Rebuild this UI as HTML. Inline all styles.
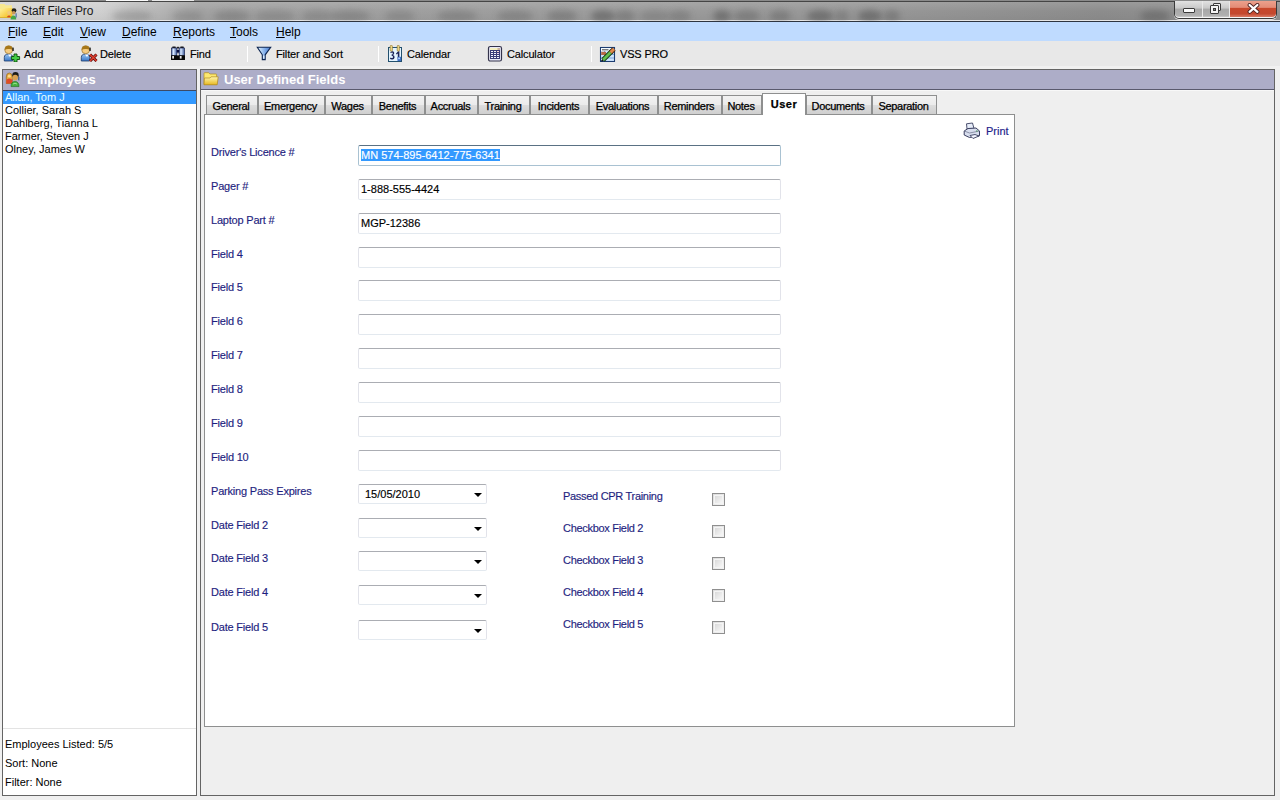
<!DOCTYPE html>
<html><head><meta charset="utf-8">
<style>
*{margin:0;padding:0;box-sizing:border-box}
html,body{width:1280px;height:800px;overflow:hidden;background:#f0f0f0;font-family:"Liberation Sans",sans-serif;font-size:11px;color:#000;-webkit-text-stroke-width:0.15px}
.a{position:absolute}
#title{left:0;top:1px;width:1280px;height:21px;overflow:hidden;background:linear-gradient(rgba(255,255,255,.12),rgba(255,255,255,0) 50%,rgba(0,0,0,.04)),linear-gradient(90deg,#d6d6d6 0,#d0d0d0 100px,#a2a2a2 200px,#9c9c9c 600px,#969696 900px,#8c8c8c 1100px,#929292 1280px);border-top:1px solid #454545;border-bottom:1px solid #2e3540;box-shadow:inset 0 -1px 0 #e6e6e6}
#menu{left:0;top:22px;width:1280px;height:19px;background:#bfdbff}
#tool{left:0;top:41px;width:1280px;height:25px;background:#e8e8e8}
.mi{top:25px;font-size:12px;color:#000;-webkit-text-stroke-width:0}
.mi u{text-decoration:underline}
.tb{top:48px;font-size:11px;letter-spacing:-0.15px}
.sep{top:46px;width:1px;height:16px;background:#a8a8a8;border-right:1px solid #fff}
.panel{border:1px solid #646464;background:#fff}
.hdr{background:#adadc8;border-bottom:1px solid #5a5a6e;height:20px}
.hdrt{color:#fff;font-weight:bold;font-size:13px;-webkit-text-stroke-width:0}
.li{-webkit-text-stroke-width:0;left:3px;width:193px;height:13px;font-size:11px;padding-left:2px;line-height:13px}
.tab{top:95px;height:19px;border:1px solid #8e8f8f;border-bottom:none;background:linear-gradient(#f2f2f2,#ebebeb 50%,#dddddd 51%,#cfcfcf);font-size:11px;text-align:center;line-height:20px;letter-spacing:-0.3px;padding-right:2px;-webkit-text-stroke:0.25px #000}
.lbl{margin-top:1px;letter-spacing:-0.2px;left:211px;color:#1e1e80;font-size:11px}
.tx{left:358px;width:423px;height:21px;border:1px solid #e2e3ea;border-top-color:#abadb3;border-bottom-color:#e3e9ef;background:#fff;font-size:11px;line-height:19px;padding-left:2px;border-radius:2px}
.cb{left:358px;width:129px;height:20px;border:1px solid #e2e3ea;border-top-color:#abadb3;border-bottom-color:#e3e9ef;background:#fff;font-size:11px;line-height:18px;padding-left:6px;border-radius:2px}
.arr{position:absolute;right:4px;top:8px;width:0;height:0;border-left:4px solid transparent;border-right:4px solid transparent;border-top:4px solid #000}
.chk{left:712px;width:13px;height:13px;border:1px solid #8f8f8f;background:linear-gradient(135deg,#dcdcdc,#f4f4f4)}
.chk::after{content:"";position:absolute;left:1px;top:1px;right:1px;bottom:1px;border:1px solid #f4f4f4;background:linear-gradient(135deg,#dadada,#f6f6f6)}
.cl{margin-top:1px;letter-spacing:-0.3px;left:563px;color:#1e1e80;font-size:11px}
</style></head><body>

<!-- title bar -->
<div class="a" style="left:0;top:0;width:1280px;height:1px;background:#8a8a8a"></div><div class="a" style="left:106px;top:0;width:42px;height:1px;background:#fafafa"></div><div class="a" style="left:152px;top:0;width:42px;height:1px;background:#e8e8e8"></div>
<div id="title" class="a"><i style="position:absolute;left:112px;top:8px;width:40px;height:12px;border-radius:50%;background:rgba(50,50,50,0.20);filter:blur(3px)"></i><i style="position:absolute;left:172px;top:8px;width:30px;height:12px;border-radius:50%;background:rgba(50,50,50,0.16);filter:blur(3px)"></i><i style="position:absolute;left:214px;top:8px;width:36px;height:12px;border-radius:50%;background:rgba(50,50,50,0.20);filter:blur(3px)"></i><i style="position:absolute;left:255px;top:8px;width:40px;height:12px;border-radius:50%;background:rgba(50,50,50,0.16);filter:blur(3px)"></i><i style="position:absolute;left:302px;top:8px;width:30px;height:12px;border-radius:50%;background:rgba(50,50,50,0.16);filter:blur(3px)"></i><i style="position:absolute;left:330px;top:8px;width:40px;height:12px;border-radius:50%;background:rgba(50,50,50,0.20);filter:blur(3px)"></i><i style="position:absolute;left:385px;top:8px;width:30px;height:12px;border-radius:50%;background:rgba(50,50,50,0.16);filter:blur(3px)"></i><i style="position:absolute;left:437px;top:8px;width:40px;height:12px;border-radius:50%;background:rgba(50,50,50,0.20);filter:blur(3px)"></i><i style="position:absolute;left:497px;top:8px;width:36px;height:12px;border-radius:50%;background:rgba(50,50,50,0.20);filter:blur(3px)"></i><i style="position:absolute;left:547px;top:8px;width:30px;height:12px;border-radius:50%;background:rgba(50,50,50,0.24);filter:blur(3px)"></i><i style="position:absolute;left:591px;top:8px;width:24px;height:12px;border-radius:50%;background:rgba(50,50,50,0.36);filter:blur(3px)"></i><i style="position:absolute;left:615px;top:8px;width:20px;height:12px;border-radius:50%;background:rgba(50,50,50,0.24);filter:blur(3px)"></i><i style="position:absolute;left:640px;top:8px;width:30px;height:12px;border-radius:50%;background:rgba(50,50,50,0.16);filter:blur(3px)"></i><i style="position:absolute;left:669px;top:8px;width:22px;height:12px;border-radius:50%;background:rgba(50,50,50,0.20);filter:blur(3px)"></i><i style="position:absolute;left:713px;top:8px;width:18px;height:12px;border-radius:50%;background:rgba(50,50,50,0.36);filter:blur(3px)"></i><i style="position:absolute;left:734px;top:8px;width:26px;height:12px;border-radius:50%;background:rgba(50,50,50,0.24);filter:blur(3px)"></i><i style="position:absolute;left:769px;top:8px;width:22px;height:12px;border-radius:50%;background:rgba(50,50,50,0.24);filter:blur(3px)"></i><i style="position:absolute;left:807px;top:8px;width:26px;height:12px;border-radius:50%;background:rgba(50,50,50,0.36);filter:blur(3px)"></i><i style="position:absolute;left:835px;top:8px;width:14px;height:12px;border-radius:50%;background:rgba(50,50,50,0.20);filter:blur(3px)"></i><i style="position:absolute;left:858px;top:8px;width:24px;height:12px;border-radius:50%;background:rgba(50,50,50,0.36);filter:blur(3px)"></i><i style="position:absolute;left:884px;top:8px;width:16px;height:12px;border-radius:50%;background:rgba(50,50,50,0.24);filter:blur(3px)"></i><i style="position:absolute;left:1140px;top:8px;width:30px;height:12px;border-radius:50%;background:rgba(50,50,50,0.28);filter:blur(3px)"></i></div>
<div class="a" style="left:21px;top:4px;font-size:12px;color:#1a1a1a;letter-spacing:-0.2px;-webkit-text-stroke-width:0">Staff Files Pro</div>

<!-- menu -->
<div id="menu" class="a"></div>
<div class="a mi" style="left:8px"><u>F</u>ile</div>
<div class="a mi" style="left:43px"><u>E</u>dit</div>
<div class="a mi" style="left:80px"><u>V</u>iew</div>
<div class="a mi" style="left:122px"><u>D</u>efine</div>
<div class="a mi" style="left:173px"><u>R</u>eports</div>
<div class="a mi" style="left:230px"><u>T</u>ools</div>
<div class="a mi" style="left:276px"><u>H</u>elp</div>

<!-- toolbar -->
<div id="tool" class="a"></div>
<div class="a tb" style="left:24px">Add</div>
<div class="a tb" style="left:100px">Delete</div>
<div class="a tb" style="left:190px">Find</div>
<div class="a sep" style="left:247px"></div>
<div class="a tb" style="left:276px">Filter and Sort</div>
<div class="a sep" style="left:378px"></div>
<div class="a tb" style="left:407px">Calendar</div>
<div class="a tb" style="left:507px">Calculator</div>
<div class="a sep" style="left:591px"></div>
<div class="a tb" style="left:620px">VSS PRO</div>

<!-- left panel -->
<div class="a panel" style="left:2px;top:69px;width:195px;height:727px"></div>
<div class="a hdr" style="left:3px;top:70px;width:193px;height:21px;border-bottom-color:#3c4a66"></div>
<div class="a hdrt" style="left:27px;top:72px">Employees</div>
<div class="a li" style="top:91px;background:#3399ff;color:#e8ffff">Allan, Tom J</div>
<div class="a li" style="top:104px">Collier, Sarah S</div>
<div class="a li" style="top:117px">Dahlberg, Tianna L</div>
<div class="a li" style="top:130px">Farmer, Steven J</div>
<div class="a li" style="top:143px">Olney, James W</div>
<div class="a" style="left:3px;top:728px;width:193px;height:1px;background:#e3e3e3"></div>
<div class="a" style="left:5px;top:738px;-webkit-text-stroke-width:0">Employees Listed: 5/5</div>
<div class="a" style="left:5px;top:757px;-webkit-text-stroke-width:0">Sort: None</div>
<div class="a" style="left:5px;top:776px;-webkit-text-stroke-width:0">Filter: None</div>

<!-- right panel -->
<div class="a panel" style="left:200px;top:69px;width:1075px;height:727px;background:#efefef"></div>
<div class="a hdr" style="left:201px;top:70px;width:1073px"></div>
<div class="a hdrt" style="left:224px;top:72px">User Defined Fields</div>
<div class="a" style="left:201px;top:90px;width:1073px;height:1px;background:#f8f8f8"></div>

<!-- tab content panel -->
<div class="a" style="left:204px;top:114px;width:811px;height:613px;background:#fff;border:1px solid #8e8f8f;border-top-color:#8e8f8f"></div>

<!-- tabs -->
<div class="a tab" style="left:206px;width:52px">General</div>
<div class="a tab" style="left:258px;width:67px">Emergency</div>
<div class="a tab" style="left:325px;width:47px">Wages</div>
<div class="a tab" style="left:372px;width:53px">Benefits</div>
<div class="a tab" style="left:425px;width:53px">Accruals</div>
<div class="a tab" style="left:478px;width:52px">Training</div>
<div class="a tab" style="left:530px;width:59px">Incidents</div>
<div class="a tab" style="left:589px;width:69px">Evaluations</div>
<div class="a tab" style="left:658px;width:64px">Reminders</div>
<div class="a tab" style="left:722px;width:40px">Notes</div>
<div class="a tab" style="left:762px;top:93px;width:44px;height:22px;background:#fff;font-weight:bold;line-height:21px;font-size:11px;letter-spacing:0.5px;padding-left:2px">User</div>
<div class="a tab" style="left:806px;width:66px">Documents</div>
<div class="a tab" style="left:872px;width:65px">Separation</div>

<!-- print -->
<div class="a" style="left:986px;top:125px;color:#21218a;font-size:11px">Print</div>

<!-- fields -->
<div class="a lbl" style="top:145px">Driver's Licence #</div>
<div class="a tx" style="top:145px;border-color:#a9c2d2;border-top-color:#5a7184"><span style="background:#3399ff;color:#fff">MN 574-895-6412-775-6341</span></div>
<div class="a lbl" style="top:179px">Pager #</div>
<div class="a tx" style="top:179px">1-888-555-4424</div>
<div class="a lbl" style="top:213px">Laptop Part #</div>
<div class="a tx" style="top:213px">MGP-12386</div>
<div class="a lbl" style="top:247px">Field 4</div>
<div class="a tx" style="top:247px"></div>
<div class="a lbl" style="top:280px">Field 5</div>
<div class="a tx" style="top:280px"></div>
<div class="a lbl" style="top:314px">Field 6</div>
<div class="a tx" style="top:314px"></div>
<div class="a lbl" style="top:348px">Field 7</div>
<div class="a tx" style="top:348px"></div>
<div class="a lbl" style="top:382px">Field 8</div>
<div class="a tx" style="top:382px"></div>
<div class="a lbl" style="top:416px">Field 9</div>
<div class="a tx" style="top:416px"></div>
<div class="a lbl" style="top:450px">Field 10</div>
<div class="a tx" style="top:450px"></div>

<div class="a lbl" style="top:484px">Parking Pass Expires</div>
<div class="a cb" style="top:484px">15/05/2010<i class="arr"></i></div>
<div class="a lbl" style="top:518px">Date Field 2</div>
<div class="a cb" style="top:518px"><i class="arr"></i></div>
<div class="a lbl" style="top:551px">Date Field 3</div>
<div class="a cb" style="top:551px"><i class="arr"></i></div>
<div class="a lbl" style="top:585px">Date Field 4</div>
<div class="a cb" style="top:585px"><i class="arr"></i></div>
<div class="a lbl" style="top:620px">Date Field 5</div>
<div class="a cb" style="top:620px"><i class="arr"></i></div>

<div class="a cl" style="top:489px">Passed CPR Training</div>
<div class="a chk" style="top:493px"></div>
<div class="a cl" style="top:521px">Checkbox Field 2</div>
<div class="a chk" style="top:525px"></div>
<div class="a cl" style="top:553px">Checkbox Field 3</div>
<div class="a chk" style="top:557px"></div>
<div class="a cl" style="top:585px">Checkbox Field 4</div>
<div class="a chk" style="top:589px"></div>
<div class="a cl" style="top:617px">Checkbox Field 5</div>
<div class="a chk" style="top:621px"></div>


<!-- ICONS -->
<svg class="a" style="left:0;top:3px" width="18" height="17" viewBox="0 0 18 17">
 <defs><linearGradient id="fy" x1="0" y1="0" x2="1" y2="1"><stop offset="0" stop-color="#fff2a0"/><stop offset="1" stop-color="#f2b810"/></linearGradient></defs>
 <path d="M0,1 H4.5 L5.5,2.2 H12 V6 H0Z" fill="#f8e890"/>
 <path d="M0,6 H4 L5,5 H12.5 V14.5 H0Z" fill="url(#fy)"/>
 <path d="M0,14.5 H12.5" stroke="#d8a818" stroke-width=".8"/>
 <ellipse cx="9" cy="10" rx="1.8" ry="2" fill="#f0c880" opacity=".9"/>
 <path d="M7.2,13.5 Q9,11.6 10.8,13.5 V14.3 H7.2Z" fill="#d84a1c"/>
 <circle cx="14" cy="7.6" r="2.4" fill="#24241c"/>
 <ellipse cx="13.7" cy="9.8" rx="1.9" ry="1.8" fill="#c89858"/>
 <path d="M10.6,16.6 Q10.6,12.6 13.5,12.6 Q16.2,12.6 16.2,16.6Z" fill="#46a846"/>
 <path d="M15.6,10.2 h1 v4.2 h-1z" fill="#34609a"/>
</svg>

<svg class="a" style="left:3px;top:44px" width="18" height="18" viewBox="0 0 18 18">
 <defs><linearGradient id="bb" x1="0" y1="0" x2="0" y2="1"><stop offset="0" stop-color="#9cc8f4"/><stop offset="1" stop-color="#3a78c8"/></linearGradient></defs>
 <path d="M1.3,17 V13.5 Q1.3,10 5.5,10 Q9.7,10 9.7,13.5 V17Z" fill="url(#bb)" stroke="#1c3a68" stroke-width=".8"/>
 <path d="M5,10.5 L7,13 L8.5,10.5Z" fill="#fff"/>
 <circle cx="5.7" cy="5.7" r="4" fill="#f6cc80" stroke="#8a6420" stroke-width=".6"/>
 <path d="M1.8,6 Q1.8,1.7 5.7,1.7 Q9.6,1.7 9.6,6 Q8,4.8 5.7,5 Q3.4,4.8 1.8,6Z" fill="#a87818"/>
 <rect x="9.4" y="3.6" width="1.3" height="3.4" fill="#111"/>
 <path d="M11,10 h3 v2.5 h2.6 v3 h-2.6 v2.5 h-3 v-2.5 h-2.6 v-3 h2.6z" fill="#44cc44" stroke="#0a4a0a" stroke-width=".9"/>
</svg>

<svg class="a" style="left:80px;top:44px" width="18" height="18" viewBox="0 0 18 18">
 <path d="M1.3,17 V13.5 Q1.3,10 5.5,10 Q9.7,10 9.7,13.5 V17Z" fill="url(#bb)" stroke="#1c3a68" stroke-width=".8"/>
 <path d="M5,10.5 L7,13 L8.5,10.5Z" fill="#fff"/>
 <circle cx="5.7" cy="5.7" r="4" fill="#f6cc80" stroke="#8a6420" stroke-width=".6"/>
 <path d="M1.8,6 Q1.8,1.7 5.7,1.7 Q9.6,1.7 9.6,6 Q8,4.8 5.7,5 Q3.4,4.8 1.8,6Z" fill="#a87818"/>
 <rect x="9.4" y="3.6" width="1.3" height="3.4" fill="#111"/>
 <path d="M10,10.5 L16.5,17 M16.5,10.5 L10,17" stroke="#5a0a0a" stroke-width="3"/>
 <path d="M10,10.5 L16.5,17 M16.5,10.5 L10,17" stroke="#e04030" stroke-width="1.6"/>
</svg>

<svg class="a" style="left:170px;top:45px" width="16" height="16" viewBox="0 0 16 16">
 <defs><linearGradient id="bn" x1="0" y1="0" x2="1" y2="0"><stop offset="0" stop-color="#4a68a8"/><stop offset=".35" stop-color="#d8e8ff"/><stop offset="1" stop-color="#3a5898"/></linearGradient></defs>
 <path d="M2,3.5 L2.5,1.5 H5.5 L6,3.5Z M10,3.5 L10.5,1.5 H13.5 L14,3.5Z" fill="#111"/>
 <rect x="6.8" y="1.8" width="2.4" height="1.6" fill="#222"/>
 <rect x="1.5" y="3" width="5.5" height="8" fill="url(#bn)" stroke="#1a2450" stroke-width=".7"/>
 <rect x="9" y="3" width="5.5" height="8" fill="url(#bn)" stroke="#1a2450" stroke-width=".7"/>
 <rect x="6.8" y="5" width="2.4" height="2.6" fill="#0a1040"/>
 <rect x="1" y="10.3" width="14" height="4.7" rx=".5" fill="#060606"/>
 <rect x="2.2" y="11" width="1.8" height="2.6" fill="#e8e8e8"/><rect x="9.8" y="11" width="1.8" height="2.6" fill="#e8e8e8"/>
 <path d="M7,10.3 L8,8.5 L9,10.3Z" fill="#f0f0f0"/>
</svg>

<svg class="a" style="left:256px;top:46px" width="16" height="15" viewBox="0 0 16 15">
 <defs><linearGradient id="fn" x1="0" y1="0" x2="1" y2="0"><stop offset="0" stop-color="#e8f8ff"/><stop offset=".6" stop-color="#7aa8e8"/><stop offset="1" stop-color="#4a78c8"/></linearGradient></defs>
 <path d="M1.3,1.3 H14.7 L9.2,8.8 V13.6 H6.3 V8.8 Z" fill="url(#fn)" stroke="#0c2450" stroke-width="1.1" stroke-linejoin="miter"/>
 <rect x="7.2" y="9.6" width="1.2" height="3" fill="#e8f4ff"/>
</svg>

<svg class="a" style="left:387px;top:45px" width="16" height="17" viewBox="0 0 16 17">
 <rect x="1.5" y="2.5" width="13" height="14" fill="#e4f4ff" stroke="#23506e" stroke-width="1"/>
 <path d="M3.2,7.2 Q4.2,6 5.8,6.2 Q7.6,6.6 7.2,8.4 Q7,9.6 5.8,10 Q7.8,10.4 7.6,12.6 Q7.2,14.8 5,14.6 Q3.5,14.4 2.8,13.4 L3.8,12.4 Q4.5,13.2 5.2,13.1 Q6,12.9 6,12 Q6,10.8 4.6,10.8 V9.4 Q5.8,9.4 5.8,8.5 Q5.8,7.6 5,7.6 Q4.4,7.6 4,8.2 Z" fill="#1c2458"/>
 <path d="M9,8.5 L11.2,6.2 H12.4 V14.5 H10.8 V8.6 L9.6,9.6Z" fill="#1c2458"/>
 <rect x="10.5" y="11.8" width="3.5" height="4.2" fill="#3f6fc8"/><rect x="11.3" y="12.6" width="1.6" height="1.6" fill="#c8e0ff"/>
 <rect x="3.2" y="0.3" width="2.2" height="6" rx="1.1" fill="#f0dc8a" stroke="#8a6a20" stroke-width=".6"/>
 <rect x="10.2" y="0.3" width="2.2" height="6" rx="1.1" fill="#f0dc8a" stroke="#8a6a20" stroke-width=".6"/>
</svg>

<svg class="a" style="left:487px;top:45px" width="16" height="17" viewBox="0 0 16 17">
 <rect x="1.5" y="1.5" width="13" height="14.5" rx="1.8" fill="#e8e8f8" stroke="#34344c" stroke-width="1.2"/>
 <rect x="3" y="3" width="10" height="2" fill="#f4f0c0"/><rect x="10.5" y="3" width="2.5" height="2" fill="#c8b0a0"/>
 <rect x="3" y="5" width="10" height="9" fill="#3a3c78"/>
 <g shape-rendering="crispEdges"><rect x="4" y="6" width="2" height="1" fill="#f4f4ff"/><rect x="7" y="6" width="2" height="1" fill="#f4f4ff"/><rect x="10" y="6" width="2" height="1" fill="#ffd8d8"/><rect x="4" y="8" width="2" height="1" fill="#f4f4ff"/><rect x="7" y="8" width="2" height="1" fill="#f4f4ff"/><rect x="10" y="8" width="2" height="1" fill="#f0d0f0"/><rect x="4" y="10" width="2" height="1" fill="#f4f4ff"/><rect x="7" y="10" width="2" height="1" fill="#f4f4ff"/><rect x="10" y="10" width="2" height="1" fill="#f4f4ff"/><rect x="4" y="12" width="2" height="1" fill="#f4f4ff"/><rect x="7" y="12" width="2" height="1" fill="#f4f4ff"/><rect x="10" y="12" width="2" height="1" fill="#f4f4ff"/></g>
</svg>

<svg class="a" style="left:599px;top:46px" width="17" height="16" viewBox="0 0 17 16">
 <rect x="1.5" y="1.5" width="14" height="14" fill="#cfe6ff" stroke="#1c3c70" stroke-width="1.1"/>
 <rect x="2" y="2" width="13" height="3.2" fill="#f4fbff"/>
 <path d="M2,8.5 H15 M2,12 H15 M5.5,5 V15" stroke="#5a88c8" stroke-width=".7"/>
 <path d="M3,3.8 H9.5" stroke="#333" stroke-width=".9"/>
 <path d="M2.2,5.8 L7,5.8 L7,9 L2.2,9Z" fill="#b86a48"/>
 <path d="M4,14 L13,5" stroke="#143a14" stroke-width="4.6"/>
 <path d="M4,14 L13,5" stroke="#62c050" stroke-width="2.8"/>
 <path d="M11.6,6.4 L15,3" stroke="#4a2a10" stroke-width="4.6"/>
 <path d="M11.6,6.4 L15,3" stroke="#e0884a" stroke-width="3"/>
 <path d="M2.5,15.2 L4,13.7" stroke="#111" stroke-width="1.5"/>
</svg>

<svg class="a" style="left:5px;top:71px" width="16" height="17" viewBox="0 0 16 17">
 <path d="M1.3,12.5 V6 Q1.3,2 4.3,2 Q7.3,2 7.3,6 V12.5 Z" fill="#e8b040" stroke="#8a5a10" stroke-width=".6"/>
 <path d="M1.3,12.5 V10 Q1.3,7.5 4.3,7.5 Q7.3,7.5 7.3,10 V12.5 Z" fill="#e04a28"/>
 <circle cx="4.3" cy="5.2" r="1.4" fill="#ffd890"/>
 <circle cx="10.5" cy="4.2" r="3.2" fill="#1c1c18"/>
 <circle cx="10.2" cy="6.6" r="2.8" fill="#d8a050"/>
 <rect x="13" y="6" width="1.4" height="3.4" fill="#4a6a98"/>
 <path d="M6,15.6 Q6,10.5 10,10.5 Q14,10.5 14,15.6 Z" fill="#48b040" stroke="#1a6a1a" stroke-width=".6"/>
 <path d="M8,13 Q10,11.5 12,13" stroke="#a8f0a0" stroke-width=".8" fill="none"/>
</svg>

<svg class="a" style="left:203px;top:72px" width="16" height="14" viewBox="0 0 16 14">
 <defs><linearGradient id="fo" x1="0" y1="0" x2="0" y2="1"><stop offset="0" stop-color="#fff8b0"/><stop offset="1" stop-color="#e8b820"/></linearGradient></defs>
 <path d="M1,1.5 Q1,.7 1.8,.7 H5.5 L7,2 H13 Q13.6,2 13.6,2.6 V12.5 H1Z" fill="#fce870" stroke="#b08a20" stroke-width=".7"/>
 <path d="M1,12.8 L1.5,6 H7 L8,4.8 H15.2 L14.2,12.8Z" fill="url(#fo)" stroke="#b08a20" stroke-width=".7"/>
</svg>

<svg class="a" style="left:963px;top:122px" width="18" height="18" viewBox="0 0 18 18">
 <path d="M4,7 L3.5,1.8 L9.5,1 L11,6.5Z" fill="#e8eefa" stroke="#3a3f60" stroke-width=".9"/>
 <path d="M1.2,9 L5,6.5 L13,6 L16.5,9 L16.5,13.8 L6.5,15.5 L1.2,13Z" fill="#d8deee" stroke="#3a3f60" stroke-width="1"/>
 <path d="M1.2,9 L6.5,11 L16.5,9" fill="none" stroke="#6a708a" stroke-width=".7"/>
 <path d="M7,13.5 L12,12.5 L16,14 L10,16.5Z" fill="#f4f6ff" stroke="#3a3f60" stroke-width=".9"/>
 <rect x="13" y="8.5" width="1.6" height="1" fill="#4a9a5a"/>
</svg>

<!-- window controls -->
<div class="a" style="left:1174px;top:1px;width:103px;height:18px;border:1px solid #3a3a3a;border-top:none;border-radius:0 0 5px 5px;background:#e8e8e8;box-shadow:0 1px 0 #e4e4e4,inset 0 -1px 0 #f4f4f4"></div>
<div class="a" style="left:1175px;top:1px;width:27px;height:16px;border-radius:0 0 0 4px;background:linear-gradient(#e2e2e2,#c8c8c8 45%,#a8a8a8 50%,#b0b0b0 90%,#c8c8c8)"></div>
<div class="a" style="left:1203px;top:1px;width:26px;height:16px;background:linear-gradient(#e2e2e2,#c8c8c8 45%,#a8a8a8 50%,#b0b0b0 90%,#c8c8c8)"></div>
<div class="a" style="left:1230px;top:1px;width:46px;height:16px;border-radius:0 0 4px 0;background:linear-gradient(#eca08c,#e48c76 40%,#c8482c 45%,#c4482e 80%,#d87a64)"></div>
<div class="a" style="left:1183px;top:8px;width:12px;height:5px;border:1px solid #3a3a3a;border-radius:1px;background:#fafafa"></div>
<div class="a" style="left:1213px;top:3px;width:8px;height:8px;border:1px solid #3a3a3a;border-radius:1px;background:#f0f0f0"></div>
<div class="a" style="left:1210px;top:5px;width:9px;height:9px;border:1.5px solid #3a3a3a;border-radius:1px;background:#f4f4f4"></div>
<div class="a" style="left:1213px;top:8px;width:3px;height:3px;border:1px solid #3a3a3a;background:#888"></div>
<svg class="a" style="left:1247px;top:3px" width="13" height="11" viewBox="0 0 13 11">
 <path d="M2.6,2 L10.4,8.8 M10.4,2 L2.6,8.8" stroke="#4a2020" stroke-width="4" stroke-linecap="round"/>
 <path d="M2.6,2 L10.4,8.8 M10.4,2 L2.6,8.8" stroke="#ffffff" stroke-width="2.3" stroke-linecap="round"/>
</svg>

</body></html>
